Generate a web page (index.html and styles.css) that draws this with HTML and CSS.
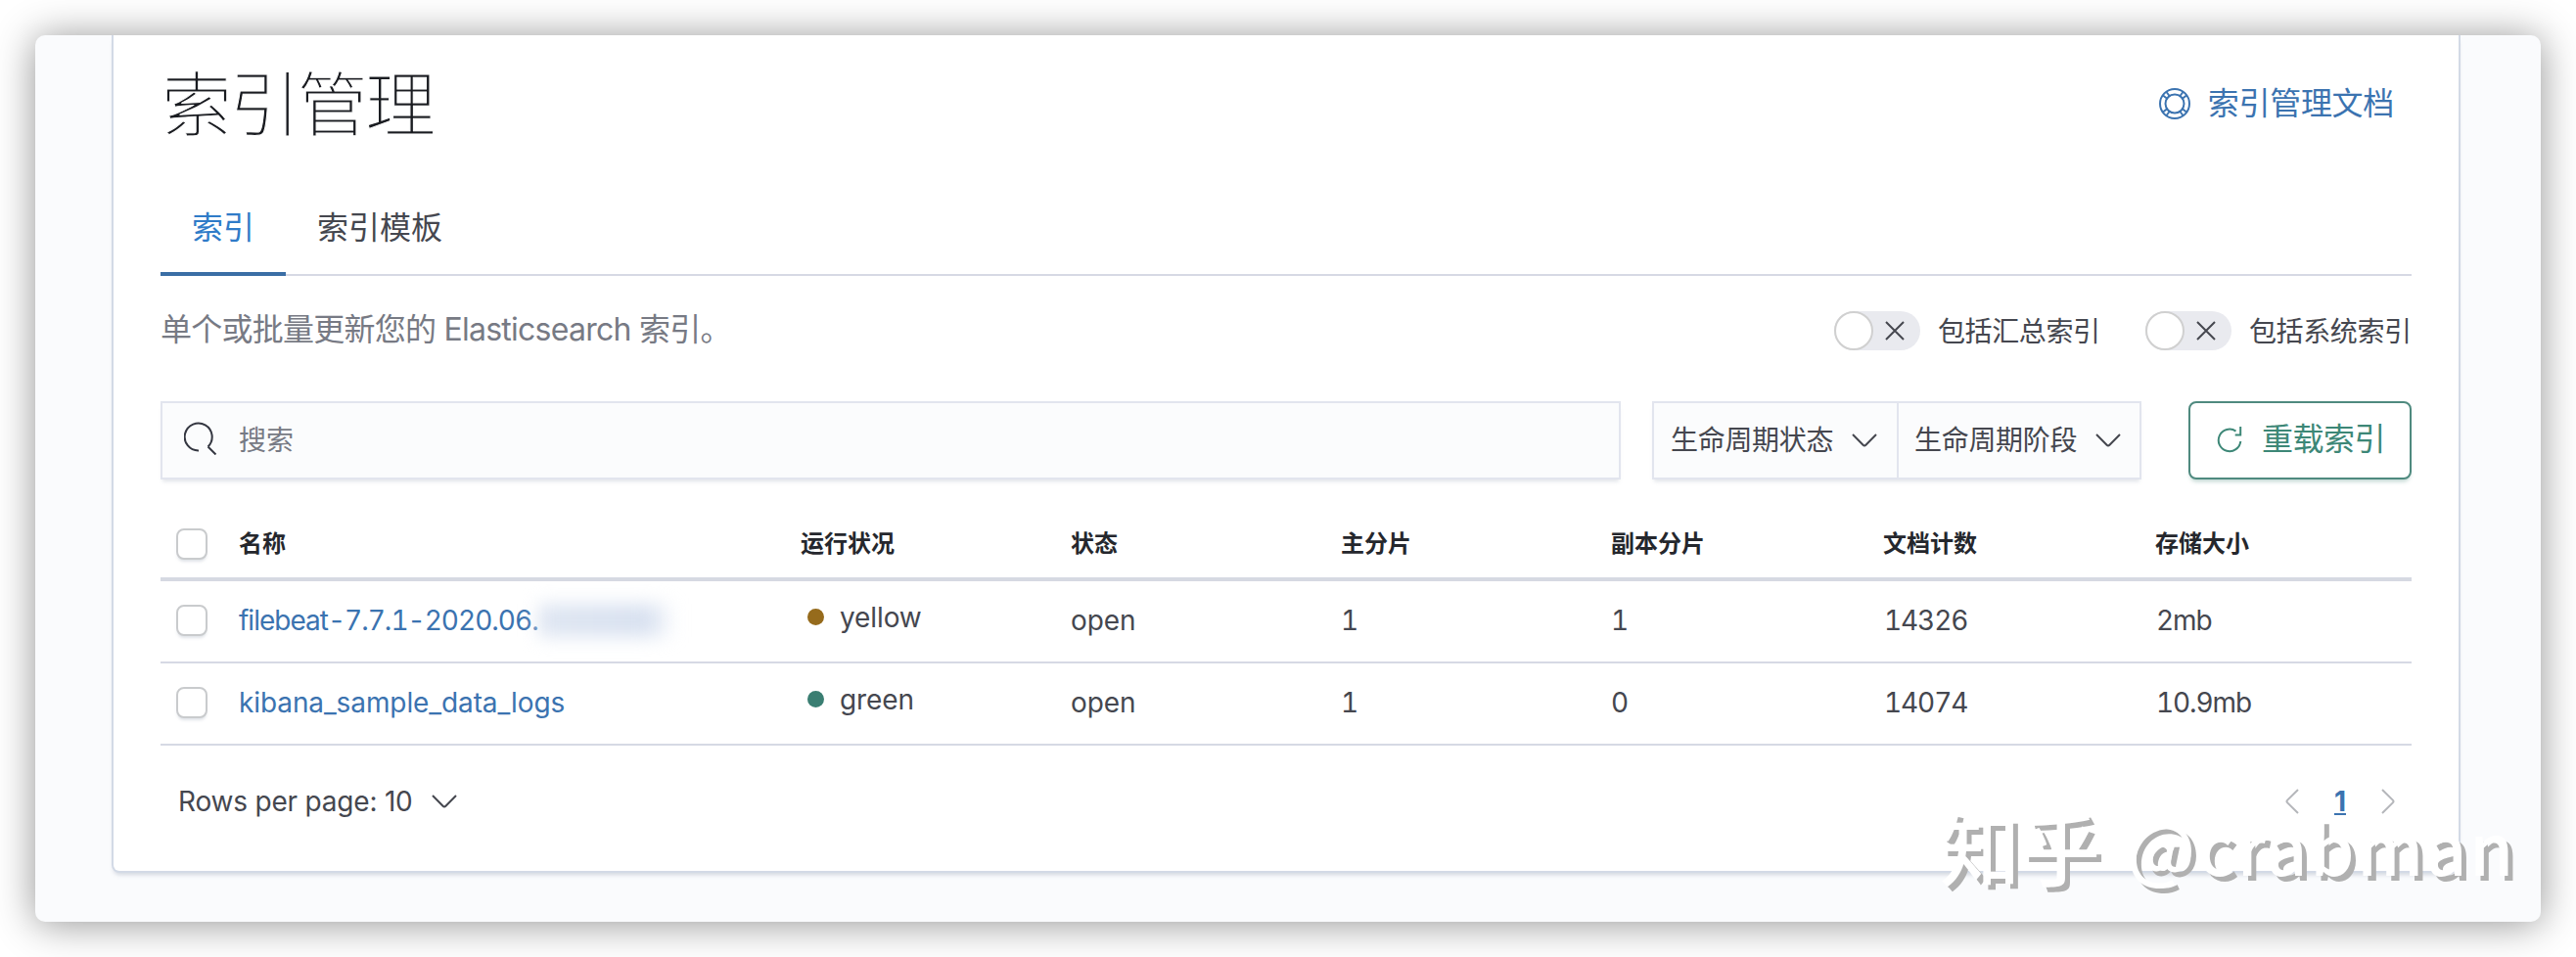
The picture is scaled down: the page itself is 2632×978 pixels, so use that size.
FILE: index.html
```html
<!DOCTYPE html>
<html lang="zh-CN">
<head>
<meta charset="utf-8">
<title>索引管理</title>
<link rel="stylesheet" href="styles.css">
</head>
<body>
<div class="window">
<main class="panel">
  <header class="page-header">
    <h1 class="title">索引管理</h1>
    <a class="doc-link">
      <svg class="icon" viewBox="0 0 32 32" width="32" height="32"><circle cx="16" cy="16" r="15"/><circle cx="16" cy="16" r="9.500"/><path d="M7.500 4l3.500 4.500M4 7.500l4.500 3.500M24.500 4L21 8.500M28 7.500L23.500 11M7.500 28l3.500-4.500M4 24.500L8.500 21M24.500 28L21 23.500M28 24.500L23.500 21"/></svg>
      <span>索引管理文档</span>
    </a>
  </header>
  <nav class="tabs"><a class="tab tab-selected">索引</a><a class="tab">索引模板</a></nav>
  <section class="intro">
    <p class="subtitle">单个或批量更新您的 Elasticsearch 索引。</p>
    <div class="switches">
      <label class="switch"><span class="track"><span class="thumb"></span><svg class="icon cross" viewBox="0 0 20 20" width="20" height="20"><path d="M1 1l18 18M19 1L1 19"/></svg></span><span class="switch-label">包括汇总索引</span></label>
      <label class="switch"><span class="track"><span class="thumb"></span><svg class="icon cross" viewBox="0 0 20 20" width="20" height="20"><path d="M1 1l18 18M19 1L1 19"/></svg></span><span class="switch-label">包括系统索引</span></label>
    </div>
  </section>
  <section class="toolbar">
    <div class="search"><svg class="icon glass" viewBox="0 0 34 34" width="34" height="34"><path d="M15 29.500A14 14 0 1 1 24.500 25.500M24.500 25.500l8 8" /></svg><span>搜索</span></div>
    <div class="filters">
      <button class="filter"><span>生命周期状态</span><svg class="icon" viewBox="0 0 26 14" width="26" height="14"><path d="M1 1l10.600 10.800q1.400 1.400 2.800 0L25 1"/></svg></button>
      <button class="filter"><span>生命周期阶段</span><svg class="icon" viewBox="0 0 26 14" width="26" height="14"><path d="M1 1l10.600 10.800q1.400 1.400 2.800 0L25 1"/></svg></button>
    </div>
    <button class="reload"><svg class="icon" viewBox="0 0 26 28" width="26" height="28"><path d="M19.500 5.600A11.300 11.300 0 1 0 24.300 16M24.200 1v8.500h-5.500"/></svg><span>重载索引</span></button>
  </section>
  <div class="table">
    <div class="row head"><span class="box"></span><span>名称</span><span>运行状况</span><span>状态</span><span>主分片</span><span>副本分片</span><span>文档计数</span><span>存储大小</span></div>
    <div class="row"><span class="box"></span><span class="name dated">filebeat-7.7.1-2020.06.<i class="smudge"></i></span><span class="health"><i class="dot yellow"></i>yellow</span><span>open</span><span>1</span><span>1</span><span class="num">14326</span><span class="num">2mb</span></div>
    <div class="row"><span class="box"></span><span class="name">kibana_sample_data_logs</span><span class="health"><i class="dot green"></i>green</span><span>open</span><span>1</span><span>0</span><span class="num">14074</span><span class="num">10.9mb</span></div>
  </div>
  <footer class="footer">
    <div class="per-page"><span>Rows per page: 10</span><svg class="icon" viewBox="0 0 26 14" width="26" height="14"><path d="M1 1l10.600 10.800q1.400 1.400 2.800 0L25 1"/></svg></div>
    <div class="pages">
      <svg class="icon arrow" viewBox="0 0 14 26" width="14" height="26"><path d="M13 1L2.200 11.600q-1.400 1.400 0 2.800L13 25"/></svg>
      <b class="current">1</b>
      <svg class="icon arrow" viewBox="0 0 14 26" width="14" height="26"><path d="M1 1l10.800 10.600q1.400 1.400 0 2.800L1 25"/></svg>
    </div>
  </footer>
</main>
</div>
<div class="watermark"><span>知乎</span><span class="handle">@crabman</span></div>
</body>
</html>
```
FILE: styles.css
```css
* { box-sizing: border-box; }
body { margin: 0; width: 2632px; height: 978px; padding: 36px; background: #fff; overflow: hidden; font: 28px/40px Inter, "Noto Sans CJK SC", sans-serif; color: #45474f; }
.window { width: 2560px; height: 906px; background: #fafbfd; border-radius: 10px; padding: 0 82px 50px 78px; overflow: hidden; box-shadow: 0 2px 40px rgba(0,0,0,.43); }
.panel { height: 856px; background: #fff; border: 2px solid #d3dae6; border-top: 0; border-radius: 0 0 8px 8px; padding: 0 48px; box-shadow: 0 4px 4px -2px rgba(152,162,179,.4); }
.icon { fill: none; stroke: currentColor; stroke-width: 2; flex: none; }
.page-header { height: 170px; display: flex; justify-content: space-between; align-items: flex-start; }
.title { margin: 23px 0 0 1px; font-size: 72px; line-height: 96px; font-weight: 300; letter-spacing: -2.6px; color: #1a1c21; -webkit-text-stroke: 1px #fff; }
.doc-link { display: flex; align-items: center; gap: 18px; margin: 50px 18px 0 0; font-size: 32px; letter-spacing: -.3px; color: #3b73b0; }
.tabs { height: 76px; display: flex; border-bottom: 2px solid #d6d9e4; font-size: 32px; }
.tab { height: 76px; padding: 7px 32px 0; }
.tab-selected { color: #2f7bc8; border-bottom: 4px solid #3a6ea5; }
.intro { display: flex; justify-content: space-between; height: 128px; padding-top: 33px; }
.subtitle { margin: 0; font-size: 32px; line-height: 44px; letter-spacing: -.75px; color: #777a84; }
.switches { display: flex; gap: 46px; height: 46px; align-items: center; }
.switch { display: flex; gap: 18px; align-items: center; }
.switch-label { width: 166px; white-space: nowrap; letter-spacing: -.4px; padding-top: 2px; }
.track { width: 88px; height: 40px; border-radius: 20px; background: #e9eaef; display: flex; align-items: center; gap: 12px; }
.thumb { width: 40px; height: 40px; border-radius: 50%; background: #fff; border: 2px solid #d0d0d0; }
.toolbar { display: flex; height: 80px; }
.search { width: 1492px; height: 80px; background: #fbfcfd; border: 2px solid #e2e5ee; display: flex; align-items: center; padding-left: 22px; gap: 22px; color: #777a84; box-shadow: 0 4px 4px -2px rgba(152,162,179,.3); }
.glass { color: #343741; position: relative; top: -2px; }
.filters { display: flex; margin: 0 48px 0 32px; box-shadow: 0 4px 4px -2px rgba(152,162,179,.3); }
button { font: inherit; color: inherit; padding: 0; margin: 0; }
.filter { width: 252px; height: 80px; background: #fbfcfd; border: 2px solid #e2e5ee; display: flex; align-items: center; gap: 19px; padding-left: 17px; letter-spacing: -.3px; }
.filter + .filter { width: 248px; border-left: 0; padding-left: 16px; }
.reload { width: 228px; height: 80px; background: #fff; border: 2px solid #4f8a7f; border-radius: 8px; display: flex; align-items: center; gap: 20px; padding: 0 0 2px 27px; font-size: 32px; letter-spacing: -.5px; color: #3d8777; box-shadow: 0 4px 4px -2px rgba(61,128,115,.35); }
.row { display: grid; grid-template-columns: 80px 574px 276px 276px 276px 278px 278px 262px; height: 84px; padding-bottom: 2px; align-items: center; border-bottom: 2px solid #d6d9e4; letter-spacing: -.1px; font-variant-numeric: tabular-nums; }
.head { height: 104px; padding: 31px 0 0; border-bottom: 4px solid #d6d9e2; font-size: 24px; font-weight: 700; color: #25272d; letter-spacing: 0; }
.box { width: 32px; height: 32px; margin-left: 16px; border: 2px solid #c9cbcd; border-radius: 8px; background: #fff; box-shadow: 0 3px 3px -1px rgba(152,162,179,.3); }
.name { color: #3b73b0; display: flex; align-items: center; }
.dated { letter-spacing: -1px; }
.num { letter-spacing: -1.1px; padding-left: 1px; }
.smudge { width: 140px; height: 34px; background: linear-gradient(90deg, #dfe6f2, #d8e1f0 80%, transparent); filter: blur(9px); }
.health { display: flex; align-items: center; gap: 16px; padding-left: 7px; margin-top: -7px; }
.dot { width: 17px; height: 17px; border-radius: 50%; }
.yellow { background: #966b1c; }
.green { background: #3a7e72; }
.footer { display: flex; justify-content: space-between; align-items: center; height: 113px; padding: 0 17px 0 18px; }
.per-page { display: flex; align-items: center; gap: 19px; letter-spacing: -.2px; }
.pages { display: flex; align-items: center; gap: 36px; }
.arrow { color: #b4b6ba; }
.current { color: #3b73b0; font-weight: 700; text-decoration: underline; }
.watermark { position: absolute; left: 1982px; top: 839px; display: flex; align-items: center; gap: 27px; height: 50px; font: 500 82px/50px "Noto Sans CJK SC", sans-serif; color: #fff; text-shadow: 5px 5px #b0b0b0; white-space: nowrap; }
.handle { font-size: 72px; letter-spacing: 2.8px; }
```
